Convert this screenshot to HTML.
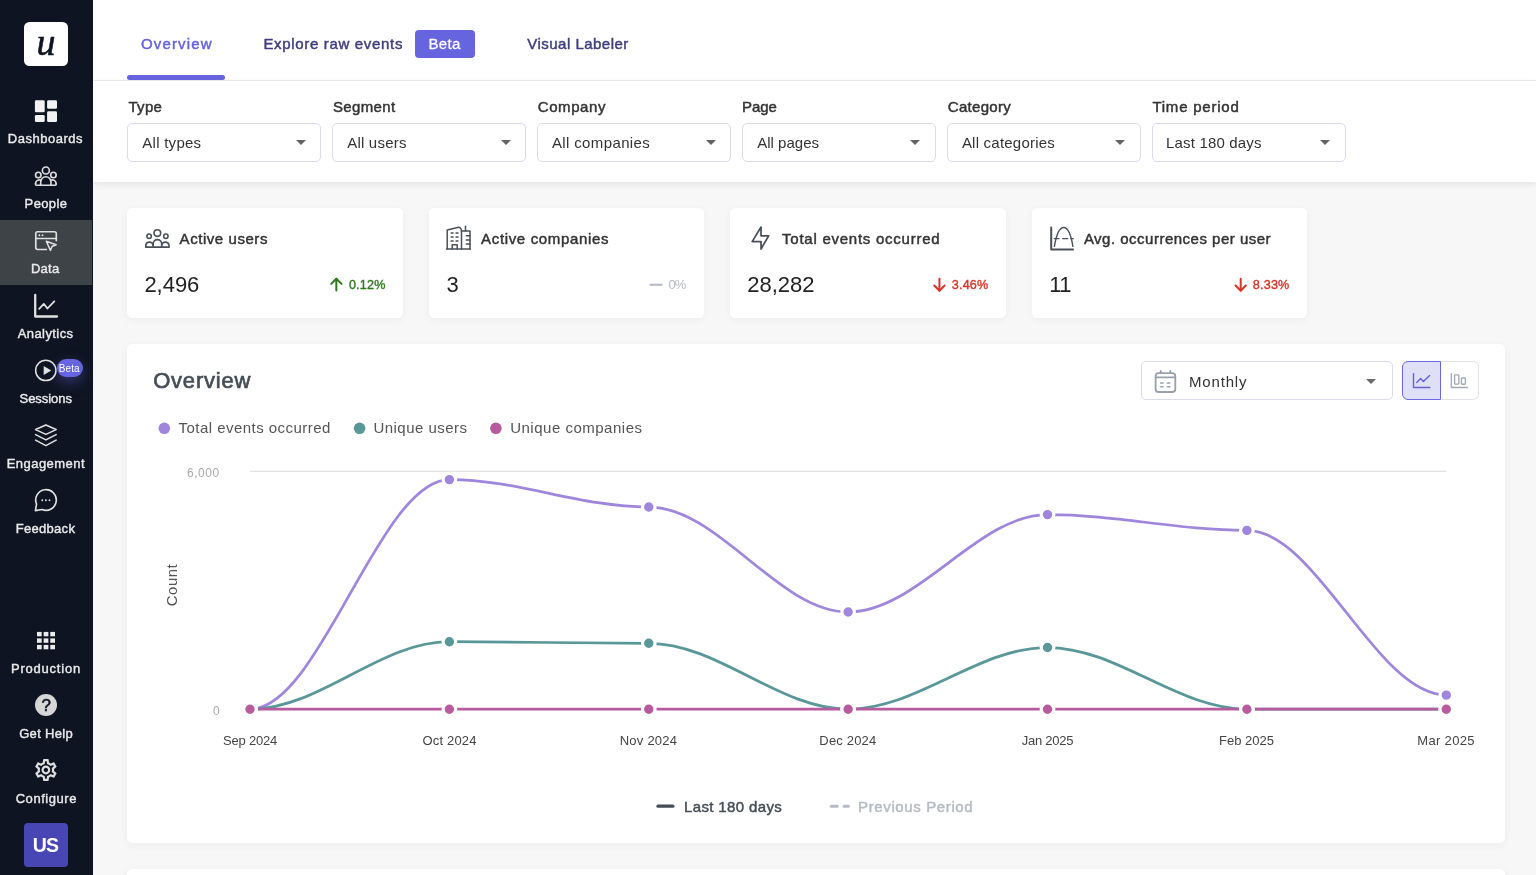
<!DOCTYPE html>
<html lang="en">
<head>
<meta charset="utf-8">
<title>Data – Overview</title>
<style>
*{box-sizing:border-box;margin:0;padding:0}
html,body{width:1536px;height:875px;overflow:hidden;background:#f7f7f7;font-family:"Liberation Sans",sans-serif;color:#333}
body{position:relative}
.a{position:absolute}
.t{position:absolute;white-space:nowrap;line-height:1}
svg{position:absolute;left:0;top:0;overflow:visible}
.sb{left:0;top:0;width:93px;height:875px;background:#0e1421}
.act{left:0;top:220px;width:92px;height:65px;background:#3e4348}
.logo{left:24px;top:22.3px;width:43.7px;height:43.6px;border-radius:5.5px;background:#fff}
.logo span{position:absolute;left:0;width:44px;top:-2.5px;text-align:center;font-family:"Liberation Serif",serif;font-style:italic;font-size:38px;line-height:44px;color:#0e1421;-webkit-text-stroke:.55px #0e1421}
.beta1{left:57px;top:358.5px;width:26px;height:18.5px;border-radius:10px;background:#6664de;box-shadow:0 5px 13px 1px rgba(102,100,222,.36)}
.ava{left:24px;top:823px;width:44px;height:43.5px;border-radius:4px;background:#4746b4}
.top{left:93px;top:0;width:1443px;height:80px;background:#fff}
.topline{left:93px;top:80px;width:1443px;height:1px;background:#eee}
.filters{left:93px;top:81px;width:1443px;height:101px;background:#fff;box-shadow:0 2px 7px rgba(0,0,0,.088)}
  .uline{left:127.2px;top:75px;width:97.6px;height:4.5px;border-radius:3px;background:#6563dd}
.beta2{left:415.2px;top:29.6px;width:59.6px;height:28px;border-radius:4px;background:#6664de}
.sel{top:122.5px;width:194.2px;height:39px;border:1px solid #dadcee;border-radius:5px;background:#fff}
.tri{width:0;height:0;border-left:5.2px solid transparent;border-right:5.2px solid transparent;border-top:5.6px solid #636363}
.card{background:#fff;border-radius:5.5px;box-shadow:0 2px 8px rgba(40,50,70,.055)}
.kpi{top:208px;width:275.4px;height:110px}
.tog1{left:1402.2px;top:361px;width:38.8px;height:39px;border:1.3px solid #6a68e0;border-radius:6px 0 0 6px;background:#dfdff6}
.tog2{left:1440.5px;top:361px;width:38px;height:39px;border:1px solid #e0e2ec;border-left:none;border-radius:0 6px 6px 0;background:#fff}
</style>
</head>
<body>
<div id="app" style="position:absolute;left:0;top:0;width:1536px;height:875px;will-change:transform">
<header>
<div class="a top"></div>
<div class="a topline"></div>
<div class="a filters"></div>
<div class="a uline"></div>
<div class="a beta2"></div>
<div class="a sel" style="left:127.3px"></div><div class="a tri" style="left:296px;top:139.8px"></div>
<div class="a sel" style="left:332.2px"></div><div class="a tri" style="left:500.7px;top:139.8px"></div>
<div class="a sel" style="left:537px"></div><div class="a tri" style="left:705.5px;top:139.8px"></div>
<div class="a sel" style="left:742px"></div><div class="a tri" style="left:910.3px;top:139.8px"></div>
<div class="a sel" style="left:947px"></div><div class="a tri" style="left:1115.1px;top:139.8px"></div>
<div class="a sel" style="left:1151.6px"></div><div class="a tri" style="left:1319.9px;top:139.8px"></div>
<span class="t" style="left:141.00px;top:35.80px;font-size:15px;font-weight:400;color:#6563dd;letter-spacing:1.146px;-webkit-text-stroke:0.46px currentColor;">Overview</span>
<span class="t" style="left:263.40px;top:35.80px;font-size:15px;font-weight:400;color:#403e7e;letter-spacing:0.673px;-webkit-text-stroke:0.46px currentColor;">Explore raw events</span>
<span class="t" style="left:428.40px;top:35.80px;font-size:15px;font-weight:400;color:#fff;letter-spacing:0.362px;-webkit-text-stroke:0.26px currentColor;">Beta</span>
<span class="t" style="left:527.30px;top:35.80px;font-size:15px;font-weight:400;color:#403e7e;letter-spacing:0.477px;-webkit-text-stroke:0.46px currentColor;">Visual Labeler</span>
<span class="t" style="left:128.40px;top:99.30px;font-size:15px;font-weight:400;color:#333;letter-spacing:0.341px;-webkit-text-stroke:0.46px currentColor;">Type</span>
<span class="t" style="left:333.00px;top:99.30px;font-size:15px;font-weight:400;color:#333;letter-spacing:0.338px;-webkit-text-stroke:0.46px currentColor;">Segment</span>
<span class="t" style="left:537.80px;top:99.30px;font-size:15px;font-weight:400;color:#333;letter-spacing:0.567px;-webkit-text-stroke:0.46px currentColor;">Company</span>
<span class="t" style="left:742.00px;top:99.30px;font-size:15px;font-weight:400;color:#333;letter-spacing:-0.096px;-webkit-text-stroke:0.46px currentColor;">Page</span>
<span class="t" style="left:947.80px;top:99.30px;font-size:15px;font-weight:400;color:#333;letter-spacing:0.305px;-webkit-text-stroke:0.46px currentColor;">Category</span>
<span class="t" style="left:1152.40px;top:99.30px;font-size:15px;font-weight:400;color:#333;letter-spacing:0.770px;-webkit-text-stroke:0.46px currentColor;">Time period</span>
<span class="t" style="left:142.30px;top:134.70px;font-size:15px;font-weight:400;color:#333;letter-spacing:0.264px;">All types</span>
<span class="t" style="left:347.20px;top:134.70px;font-size:15px;font-weight:400;color:#333;letter-spacing:0.210px;">All users</span>
<span class="t" style="left:551.90px;top:134.70px;font-size:15px;font-weight:400;color:#333;letter-spacing:0.377px;">All companies</span>
<span class="t" style="left:757.20px;top:134.70px;font-size:15px;font-weight:400;color:#333;letter-spacing:0.024px;">All pages</span>
<span class="t" style="left:961.90px;top:134.70px;font-size:15px;font-weight:400;color:#333;letter-spacing:0.220px;">All categories</span>
<span class="t" style="left:1166.00px;top:134.70px;font-size:15px;font-weight:400;color:#333;letter-spacing:0.175px;">Last 180 days</span>
</header>
<main>
<div class="a card kpi" style="left:127px;width:276px"></div>
<div class="a card kpi" style="left:429px;width:275.3px"></div>
<div class="a card kpi" style="left:730.3px;width:275.5px"></div>
<div class="a card kpi" style="left:1031.7px;width:275.4px"></div>
<div class="a card" style="left:127px;top:344px;width:1378px;height:499px"></div>
<div class="a card" style="left:127px;top:869px;width:1378px;height:60px"></div>
<div class="a sel" style="left:1141px;top:361.2px;width:252px;height:38.8px"></div><div class="a tri" style="left:1365.5px;top:378.6px;border-top-color:#6a6a6a"></div>
<div class="a tog1"></div><div class="a tog2"></div>
<svg width="1536" height="875" viewBox="0 0 1536 875">
<line x1="250" y1="471.3" x2="1446.4" y2="471.3" stroke="#e2e2e2" stroke-width="1.2"/>
<path d="M250.00 709.20C319.78 709.20 379.60 479.60 449.38 479.60C519.16 479.60 578.98 507.00 648.76 507.00C718.54 507.00 778.36 612.00 848.14 612.00C917.92 612.00 977.74 514.60 1047.52 514.60C1117.30 514.60 1177.12 530.40 1246.90 530.40C1316.68 530.40 1376.50 695.10 1446.28 695.10" fill="none" stroke="#a085dd" stroke-width="2.75" stroke-linecap="round"/>
<path d="M250.00 709.20C319.78 709.20 379.60 641.70 449.38 641.70C519.16 641.70 578.98 643.30 648.76 643.30C718.54 643.30 778.36 709.20 848.14 709.20C917.92 709.20 977.74 647.50 1047.52 647.50C1117.30 647.50 1177.12 709.20 1246.90 709.20C1316.68 709.20 1376.50 709.20 1446.28 709.20" fill="none" stroke="#5a9799" stroke-width="2.75" stroke-linecap="round"/>
<path d="M250.00 709.20C319.78 709.20 379.60 709.20 449.38 709.20C519.16 709.20 578.98 709.20 648.76 709.20C718.54 709.20 778.36 709.20 848.14 709.20C917.92 709.20 977.74 709.20 1047.52 709.20C1117.30 709.20 1177.12 709.20 1246.90 709.20C1316.68 709.20 1376.50 709.20 1446.28 709.20" fill="none" stroke="#b85b9e" stroke-width="2.75" stroke-linecap="round"/>
<g fill="#a085dd" stroke="#fff" stroke-width="3.2"><circle cx="250.00" cy="709.20" r="6.3"/><circle cx="449.38" cy="479.60" r="6.3"/><circle cx="648.76" cy="507.00" r="6.3"/><circle cx="848.14" cy="612.00" r="6.3"/><circle cx="1047.52" cy="514.60" r="6.3"/><circle cx="1246.90" cy="530.40" r="6.3"/><circle cx="1446.28" cy="695.10" r="6.3"/></g>
<g fill="#5a9799" stroke="#fff" stroke-width="3.2"><circle cx="250.00" cy="709.20" r="6.3"/><circle cx="449.38" cy="641.70" r="6.3"/><circle cx="648.76" cy="643.30" r="6.3"/><circle cx="848.14" cy="709.20" r="6.3"/><circle cx="1047.52" cy="647.50" r="6.3"/><circle cx="1246.90" cy="709.20" r="6.3"/><circle cx="1446.28" cy="709.20" r="6.3"/></g>
<g fill="#b85b9e" stroke="#fff" stroke-width="3.2"><circle cx="250.00" cy="709.20" r="6.3"/><circle cx="449.38" cy="709.20" r="6.3"/><circle cx="648.76" cy="709.20" r="6.3"/><circle cx="848.14" cy="709.20" r="6.3"/><circle cx="1047.52" cy="709.20" r="6.3"/><circle cx="1246.90" cy="709.20" r="6.3"/><circle cx="1446.28" cy="709.20" r="6.3"/></g>
<circle cx="164.3" cy="428.3" r="5.8" fill="#a085dd"/>
<circle cx="359.6" cy="428.3" r="5.8" fill="#5a9799"/>
<circle cx="495.9" cy="428.3" r="5.8" fill="#b85b9e"/>
<line x1="658" y1="806.2" x2="672.9" y2="806.2" stroke="#454d57" stroke-width="3.2" stroke-linecap="round"/>
<line x1="831.3" y1="806.2" x2="837.2" y2="806.2" stroke="#b5bbc4" stroke-width="3" stroke-linecap="round"/>
<line x1="844.2" y1="806.2" x2="848.3" y2="806.2" stroke="#b5bbc4" stroke-width="3" stroke-linecap="round"/>
</svg>
<span class="t" style="left:179.60px;top:230.50px;font-size:15px;font-weight:400;color:#333;letter-spacing:0.555px;-webkit-text-stroke:0.46px currentColor;">Active users</span>
<span class="t" style="left:481.10px;top:230.50px;font-size:15px;font-weight:400;color:#333;letter-spacing:0.650px;-webkit-text-stroke:0.46px currentColor;">Active companies</span>
<span class="t" style="left:782.10px;top:230.50px;font-size:15px;font-weight:400;color:#333;letter-spacing:0.748px;-webkit-text-stroke:0.46px currentColor;">Total events occurred</span>
<span class="t" style="left:1083.90px;top:230.50px;font-size:15px;font-weight:400;color:#333;letter-spacing:0.495px;-webkit-text-stroke:0.46px currentColor;">Avg. occurrences per user</span>
<span class="t" style="left:144.40px;top:273.90px;font-size:22px;font-weight:400;color:#222;letter-spacing:-0.030px;">2,496</span>
<span class="t" style="left:446.40px;top:273.90px;font-size:22px;font-weight:400;color:#222;">3</span>
<span class="t" style="left:747.30px;top:273.90px;font-size:22px;font-weight:400;color:#222;letter-spacing:-0.011px;">28,282</span>
<span class="t" style="left:1049.30px;top:273.90px;font-size:22px;font-weight:400;color:#222;letter-spacing:-0.703px;">11</span>
<span class="t" style="left:348.90px;top:279.10px;font-size:12.6px;font-weight:400;color:#2d7a1e;letter-spacing:0.197px;-webkit-text-stroke:0.39px currentColor;">0.12%</span>
<span class="t" style="left:668.40px;top:278.40px;font-size:13px;font-weight:400;color:#b3bac5;letter-spacing:-0.800px;">0%</span>
<span class="t" style="left:951.80px;top:279.10px;font-size:12.6px;font-weight:400;color:#d7352b;letter-spacing:0.172px;-webkit-text-stroke:0.39px currentColor;">3.46%</span>
<span class="t" style="left:1252.80px;top:279.10px;font-size:12.6px;font-weight:400;color:#d7352b;letter-spacing:0.197px;-webkit-text-stroke:0.39px currentColor;">8.33%</span>
<span class="t" style="left:153.20px;top:369.90px;font-size:22px;font-weight:400;color:#454d57;letter-spacing:0.786px;-webkit-text-stroke:0.68px currentColor;">Overview</span>
<span class="t" style="left:1189.00px;top:374.00px;font-size:15px;font-weight:400;color:#333;letter-spacing:0.830px;">Monthly</span>
<span class="t" style="left:178.60px;top:420.30px;font-size:15px;font-weight:400;color:#555;letter-spacing:0.458px;">Total events occurred</span>
<span class="t" style="left:373.40px;top:420.30px;font-size:15px;font-weight:400;color:#555;letter-spacing:0.474px;">Unique users</span>
<span class="t" style="left:510.20px;top:420.30px;font-size:15px;font-weight:400;color:#555;letter-spacing:0.504px;">Unique companies</span>
<span class="t" style="left:187.10px;top:466.50px;font-size:12px;font-weight:400;color:#aaa;letter-spacing:0.511px;">6,000</span>
<span class="t" style="left:212.90px;top:704.70px;font-size:12px;font-weight:400;color:#aaa;">0</span>
<span class="t" style="left:222.90px;top:733.80px;font-size:13px;font-weight:400;color:#444;letter-spacing:-0.176px;">Sep 2024</span>
<span class="t" style="left:422.48px;top:733.80px;font-size:13px;font-weight:400;color:#444;letter-spacing:0.182px;">Oct 2024</span>
<span class="t" style="left:619.76px;top:733.80px;font-size:13px;font-weight:400;color:#444;letter-spacing:0.226px;">Nov 2024</span>
<span class="t" style="left:819.34px;top:733.80px;font-size:13px;font-weight:400;color:#444;letter-spacing:0.169px;">Dec 2024</span>
<span class="t" style="left:1021.77px;top:733.80px;font-size:13px;font-weight:400;color:#444;letter-spacing:-0.252px;">Jan 2025</span>
<span class="t" style="left:1219.00px;top:733.80px;font-size:13px;font-weight:400;color:#444;letter-spacing:0.014px;">Feb 2025</span>
<span class="t" style="left:1417.23px;top:733.80px;font-size:13px;font-weight:400;color:#444;letter-spacing:0.344px;">Mar 2025</span>
<span class="t" style="left:684.00px;top:798.70px;font-size:15px;font-weight:400;color:#454d57;letter-spacing:0.367px;-webkit-text-stroke:0.46px currentColor;">Last 180 days</span>
<span class="t" style="left:858.10px;top:798.70px;font-size:15px;font-weight:400;color:#b5bbc4;letter-spacing:0.618px;-webkit-text-stroke:0.46px currentColor;">Previous Period</span>
<span class="t" style="left:170.7px;top:584.6px;font-size:15px;color:#555;transform:translate(-50%,-50%) rotate(-90deg);letter-spacing:.5px">Count</span>
</main>
<nav>
<div class="a sb"></div>
<div class="a act"></div>
<div class="a logo"><span>u</span></div>
<div class="a beta1"></div>
<div class="a ava"></div>
<div class="a" style="left:34.85px;top:694.25px;width:22.1px;height:22.1px;border-radius:50%;background:#d6d6d6"></div>
<span class="t" style="left:7.80px;top:131.80px;font-size:13px;font-weight:400;color:#eaeaea;letter-spacing:0.511px;-webkit-text-stroke:0.40px currentColor;">Dashboards</span>
<span class="t" style="left:24.60px;top:196.90px;font-size:13px;font-weight:400;color:#eaeaea;letter-spacing:0.370px;-webkit-text-stroke:0.40px currentColor;">People</span>
<span class="t" style="left:30.90px;top:261.80px;font-size:13px;font-weight:400;color:#eaeaea;letter-spacing:0.257px;-webkit-text-stroke:0.40px currentColor;">Data</span>
<span class="t" style="left:17.70px;top:326.80px;font-size:13px;font-weight:400;color:#eaeaea;letter-spacing:0.423px;-webkit-text-stroke:0.40px currentColor;">Analytics</span>
<span class="t" style="left:19.60px;top:391.80px;font-size:13px;font-weight:400;color:#eaeaea;letter-spacing:-0.064px;-webkit-text-stroke:0.40px currentColor;">Sessions</span>
<span class="t" style="left:6.70px;top:456.80px;font-size:13px;font-weight:400;color:#eaeaea;letter-spacing:0.466px;-webkit-text-stroke:0.40px currentColor;">Engagement</span>
<span class="t" style="left:15.80px;top:521.80px;font-size:13px;font-weight:400;color:#eaeaea;letter-spacing:0.287px;-webkit-text-stroke:0.40px currentColor;">Feedback</span>
<span class="t" style="left:11.00px;top:661.80px;font-size:13px;font-weight:400;color:#eaeaea;letter-spacing:0.776px;-webkit-text-stroke:0.40px currentColor;">Production</span>
<span class="t" style="left:19.20px;top:726.80px;font-size:13px;font-weight:400;color:#eaeaea;letter-spacing:0.318px;-webkit-text-stroke:0.40px currentColor;">Get Help</span>
<span class="t" style="left:15.70px;top:791.70px;font-size:13px;font-weight:400;color:#eaeaea;letter-spacing:0.545px;-webkit-text-stroke:0.40px currentColor;">Configure</span>
<span class="t" style="left:58.70px;top:363.50px;font-size:10px;font-weight:400;color:#fff;letter-spacing:0.130px;">Beta</span>
<span class="t" style="left:32.70px;top:835.55px;font-size:19.5px;font-weight:700;color:#fff;letter-spacing:-0.800px;">US</span>
<span class="t" style="left:41.40px;top:697.20px;font-size:17px;font-weight:400;color:#0e1421;-webkit-text-stroke:0.53px currentColor;">?</span>
</nav>
<svg width="1536" height="875" viewBox="0 0 1536 875" fill="none" stroke-linecap="round" stroke-linejoin="round">
<!-- sidebar: dashboards -->
<g fill="#f2f2f2"><rect x="34.9" y="100.2" width="9.8" height="12" rx="1.3"/><rect x="34.9" y="114.9" width="9.8" height="7.2" rx="1.3"/><rect x="47.1" y="100.2" width="9.9" height="8.5" rx="1.3"/><rect x="47.1" y="111.3" width="9.9" height="10.8" rx="1.3"/></g>
<!-- sidebar: people -->
<g stroke="#dedede" stroke-width="1.65"><circle cx="45.85" cy="170.45" r="3.5"/><circle cx="38.3" cy="175" r="2.75"/><circle cx="53.4" cy="175" r="2.75"/>
<path d="M40.7 185.2v-3.3a5.13 5.13 0 0 1 10.26 0v3.3"/><path d="M35.55 183.5a3.8 3.8 0 0 1 5.5-3.2"/><path d="M56.1 183.5a3.8 3.8 0 0 0-5.5-3.2"/>
<path d="M35.55 183.5v1a.7.7 0 0 0 .7.7h19.15a.7.7 0 0 0 .7-.7v-1"/></g>
<!-- sidebar: data -->
<g stroke="#e0e0e0" stroke-width="1.65"><path d="M46.4 249.5H37.7a1.9 1.9 0 0 1-1.9-1.9V233.6a1.9 1.9 0 0 1 1.9-1.9h16.7a1.9 1.9 0 0 1 1.9 1.9v7.1"/><path d="M35.8 238.5H56.3"/>
<path d="M46.3 241.3L56.1 244.7L52 246.5L50.4 250.4Z" stroke-width="1.5"/></g>
<g fill="#e0e0e0"><circle cx="39.3" cy="235.2" r=".95"/><circle cx="42.5" cy="235.2" r=".95"/></g>
<!-- sidebar: analytics -->
<path d="M35.2 294.9V316.5H57" stroke="#e0e0e0" stroke-width="2.3"/>
<path d="M39.2 308.8L43.8 303.9L47.4 308.5L54.3 301.3" stroke="#e0e0e0" stroke-width="1.8"/>
<!-- sidebar: sessions -->
<circle cx="45.8" cy="370.45" r="10.15" stroke="#e0e0e0" stroke-width="1.5"/><path d="M43.7 366L51.3 370.45L43.7 374.9Z" fill="#e0e0e0"/>
<!-- sidebar: engagement -->
<g stroke="#e0e0e0" stroke-width="1.6"><path d="M45.85 424.9L56.1 429.6L45.85 434.4L35.6 429.6Z"/><path d="M35.6 434.6L45.85 439.9L56.1 434.6"/><path d="M35.6 440.1L45.85 445.6L56.1 440.1"/></g>
<!-- sidebar: feedback -->
<path d="M41.98 509.48A10.3 10.3 0 1 0 36.52 504.02L35.4 510.6Z" stroke="#e0e0e0" stroke-width="1.65"/>
<g fill="#e0e0e0"><circle cx="42.3" cy="500.2" r=".95"/><circle cx="45.9" cy="500.2" r=".95"/><circle cx="49.5" cy="500.2" r=".95"/></g>
<!-- sidebar: production -->
<g fill="#ececec"><rect x="37" y="631.9" width="4.7" height="4.4"/><rect x="43.65" y="631.9" width="4.7" height="4.4"/><rect x="50.3" y="631.9" width="4.7" height="4.4"/>
<rect x="37" y="638.4" width="4.7" height="4.4"/><rect x="43.65" y="638.4" width="4.7" height="4.4"/><rect x="50.3" y="638.4" width="4.7" height="4.4"/>
<rect x="37" y="644.9" width="4.7" height="4.4"/><rect x="43.65" y="644.9" width="4.7" height="4.4"/><rect x="50.3" y="644.9" width="4.7" height="4.4"/></g>
<!-- sidebar: help -->
<!-- sidebar: configure (gear) -->
<g transform="translate(32.7 756.8) scale(1.1)" fill="#dedede"><path d="M19.43 12.98c.04-.32.07-.64.07-.98 0-.34-.03-.66-.07-.98l2.11-1.65c.19-.15.24-.42.12-.64l-2-3.46c-.09-.16-.26-.25-.44-.25-.06 0-.12.01-.17.03l-2.49 1c-.52-.4-1.08-.73-1.69-.98l-.38-2.65C14.46 2.18 14.25 2 14 2h-4c-.25 0-.46.18-.49.42l-.38 2.65c-.61.25-1.17.59-1.69.98l-2.49-1c-.06-.02-.12-.03-.18-.03-.17 0-.34.09-.43.25l-2 3.46c-.13.22-.07.49.12.64l2.11 1.65c-.04.32-.07.65-.07.98 0 .33.03.66.07.98l-2.11 1.65c-.19.15-.24.42-.12.64l2 3.46c.09.16.26.25.44.25.06 0 .12-.01.17-.03l2.49-1c.52.4 1.08.73 1.69.98l.38 2.65c.03.24.24.42.49.42h4c.25 0 .46-.18.49-.42l.38-2.65c.61-.25 1.17-.59 1.69-.98l2.49 1c.06.02.12.03.18.03.17 0 .34-.09.43-.25l2-3.46c.12-.22.07-.49-.12-.64l-2.11-1.65zm-1.98-1.71c.04.31.05.52.05.73 0 .21-.02.43-.05.73l-.14 1.13.89.7 1.08.84-.7 1.21-1.27-.51-1.04-.42-.9.68c-.43.32-.84.56-1.25.73l-1.06.43-.16 1.13-.2 1.35h-1.4l-.19-1.35-.16-1.13-1.06-.43c-.43-.18-.83-.41-1.23-.71l-.91-.7-1.06.43-1.27.51-.7-1.21 1.08-.84.89-.7-.14-1.13c-.03-.31-.05-.54-.05-.74s.02-.43.05-.73l.14-1.13-.89-.7-1.08-.84.7-1.21 1.27.51 1.04.42.9-.68c.43-.32.84-.56 1.25-.73l1.06-.43.16-1.13.2-1.35h1.39l.19 1.35.16 1.13 1.06.43c.43.18.83.41 1.23.71l.91.7 1.06-.43 1.27-.51.7 1.21-1.07.85-.89.7.14 1.13zM12 8c-2.21 0-4 1.79-4 4s1.79 4 4 4 4-1.79 4-4-1.79-4-4-4zm0 6c-1.1 0-2-.9-2-2s.9-2 2-2 2 .9 2 2-.9 2-2 2z"/></g>

<!-- card 1: people -->
<g stroke="#4a5058" stroke-width="1.6"><circle cx="157.35" cy="233.1" r="3.3"/><circle cx="149.1" cy="236.25" r="2.2"/><circle cx="165.85" cy="236.25" r="2.2"/>
<path d="M153.1 247.1v-3.2a4.3 4.3 0 0 1 8.6 0v3.2"/><path d="M145.8 247.1V245.2a3.7 3.7 0 0 1 7.3 0"/><path d="M169 247.1V245.2a3.7 3.7 0 0 0-7.3 0"/><path d="M145.8 247.1H169"/></g>
<!-- card 2: building -->
<g stroke="#4a5058" stroke-width="1.5"><path d="M447.2 249.1V230L457.6 227.4c2.2-.55 3.9 1.1 3.9 3.5V249.1"/><path d="M461.5 230.9H470v18.2"/><path d="M465.5 226.3v4.6"/><path d="M446.5 249.1H470.4"/>
<path d="M452.2 249V244.7h5v4.3"/><path d="M466.3 235.8H470M466.3 240H470M466.3 244.1H470"/>
<path d="M451.3 233h1.6M456.2 233h1.6M451.3 237h1.6M456.2 237h1.6M451.3 241h1.6M456.2 241h1.6" stroke-width="1.7"/></g>
<!-- card 3: bolt -->
<path d="M761.05 227L752.2 241.6H761.05V249L768.65 235.85H761.05Z" stroke="#4a5058" stroke-width="1.75"/>
<!-- card 4: bell -->
<path d="M1051.2 227.5V249.4H1073" stroke="#4a5058" stroke-width="2"/>
<path d="M1054.4 246.3C1058.6 221.2 1068.7 221.2 1072.9 246.3" stroke="#4a5058" stroke-width="1.4"/>
<path d="M1054.2 238.6h4.8M1062.5 238.6h5.4M1070.8 238.6h2.6" stroke="#4a5058" stroke-width="1.05"/>
<!-- delta arrows -->
<g stroke="#2d7a1e" stroke-width="2"><path d="M336.35 290.6V278.8"/><path d="M331.2 283.9L336.35 278.7L341.5 283.9"/></g>
<g stroke="#d7352b" stroke-width="2"><path d="M939.45 278.8V290.6"/><path d="M934.3 285.5L939.45 290.7L944.6 285.5"/></g>
<g stroke="#d7352b" stroke-width="2"><path d="M1240.7 278.8V290.6"/><path d="M1235.55 285.5L1240.7 290.7L1245.85 285.5"/></g>
<path d="M650.4 284.7H661.8" stroke="#b3bac5" stroke-width="2"/>
<!-- calendar -->
<g stroke="#98a1ab" stroke-width="1.8"><rect x="1155.6" y="373.1" width="19.7" height="18.9" rx="3"/><path d="M1155.6 377.4h19.7"/><path d="M1160.8 370.9v2.2M1170.3 370.9v2.2"/>
<path d="M1160.7 382.9h2.4M1167.4 382.9h2.4M1160.7 386.7h2.4M1167.4 386.7h2.4" stroke-width="1.5"/></g>
<!-- toggle icons -->
<g stroke="#6462da" stroke-width="1.4"><path d="M1413.5 373.6V387.5H1429.8"/><path d="M1416.8 382.4L1420.6 378.6L1423.4 381.6L1429.6 375.6"/></g>
<g stroke="#a2aab4" stroke-width="1.35"><path d="M1451.3 373.6V387.5H1467.5"/><rect x="1454.6" y="374.8" width="4.2" height="9.4" rx=".8"/><rect x="1461.4" y="378" width="4" height="6.2" rx=".8"/></g>
</svg>

</div>
</body>
</html>
